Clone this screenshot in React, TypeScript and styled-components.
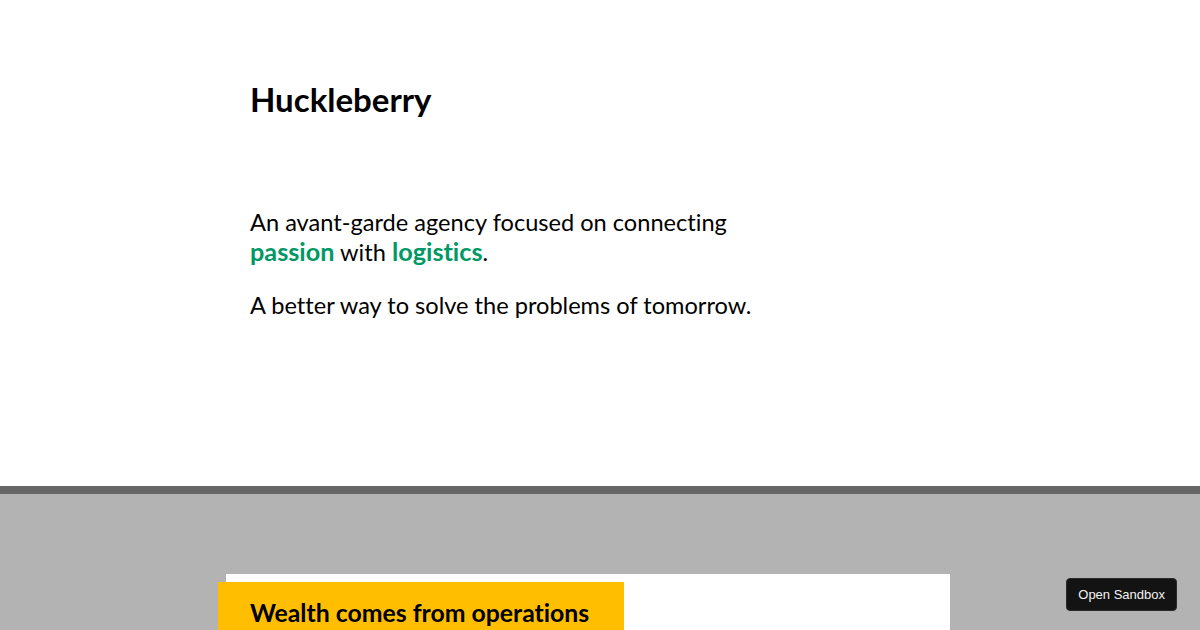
import React from "react";
import styled, { createGlobalStyle } from "styled-components";

const GlobalStyle = createGlobalStyle`
  html, body {
    margin: 0;
    padding: 0;
  }
  body {
    font-family: Lato, "Noto Sans", sans-serif;
    font-variant-ligatures: none;
    color: #000;
    background: #b3b3b3;
  }
`

const Hero = styled.header`
  background: #fff;
  height: 486px;
  box-sizing: border-box;
  padding-top: 79px;
`

const Container = styled.div`
  width: 700px;
  margin: 0 auto;
`

const Title = styled.h1`
  font-size: 33px;
  font-weight: 700;
  line-height: 40px;
  margin: 0 0 89px;
`

const Lead = styled.p`
  font-size: 23.6px;
  line-height: 29px;
  max-width: 520px;
  margin: 0 0 24px;
`

const Accent = styled.strong`
  color: #009966;
  font-weight: 700;
  font-size: 1.07em;
`

const Section = styled.section`
  border-top: 8px solid #666;
  background: #b3b3b3;
  padding-top: 80px;
  min-height: 200px;
`

const Card = styled.div`
  background: #fff;
  margin-left: -24px;
  width: 724px;
  padding-top: 8px;
  min-height: 120px;
`

const Label = styled.div`
  background: #ffbf00;
  margin-left: -8px;
  width: 406px;
  box-sizing: border-box;
  padding: 15px 32px 13px;
`

const LabelText = styled.h2`
  font-size: 24.8px;
  font-weight: 700;
  line-height: 32px;
  margin: 0;
  white-space: nowrap;
`

const SandboxButton = styled.button`
  position: fixed;
  right: 23px;
  bottom: 19px;
  height: 33px;
  padding: 0 11px;
  background: #131313;
  color: #f2f2f2;
  border: 1px solid #2a2a2a;
  border-radius: 4px;
  font-family: "Liberation Sans", Arial, sans-serif;
  font-size: 13px;
  cursor: pointer;
`

export default function App() {
  return (
    <>
      <GlobalStyle />
      <Hero>
        <Container>
          <Title>Huckleberry</Title>
          <Lead>
            An avant-garde agency focused on connecting <Accent>passion</Accent> with{" "}
            <Accent>logistics</Accent>.
          </Lead>
          <Lead>A better way to solve the problems of tomorrow.</Lead>
        </Container>
      </Hero>
      <Section>
        <Container>
          <Card>
            <Label>
              <LabelText>Wealth comes from operations</LabelText>
            </Label>
          </Card>
        </Container>
      </Section>
      <SandboxButton>Open Sandbox</SandboxButton>
    </>
  );
}
